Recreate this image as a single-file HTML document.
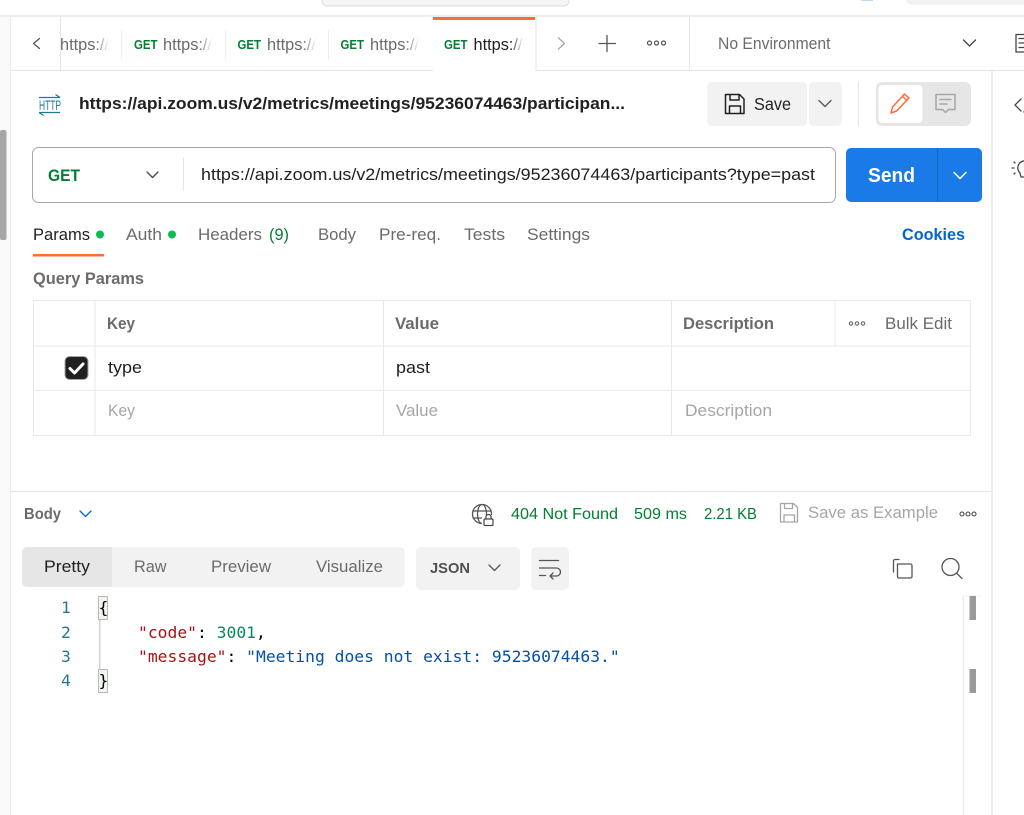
<!DOCTYPE html>
<html><head><meta charset="utf-8"><title>Postman</title>
<style>
html,body{margin:0;padding:0;background:#fff;width:1024px;height:815px;overflow:hidden}
svg{display:block;position:absolute;left:0;top:0}
text{font-family:"Liberation Sans",sans-serif;font-size:16.5px;fill:#212121;white-space:pre}
.g{fill:#6b6b6b}.l{fill:#a6a6a6}.b{font-weight:700}
.gr{fill:#007f31}
.m{font-family:"DejaVu Sans Mono",monospace;font-size:16.33px}
.n{fill:#237893}
.s{fill:none;stroke-width:1.3;stroke-linecap:round;stroke-linejoin:round}
</style></head><body>
<svg width="1024" height="815" viewBox="0 0 1024 815" xmlns="http://www.w3.org/2000/svg">
<defs><linearGradient id="f"><stop offset="0" stop-color="#fff" stop-opacity="0"/><stop offset="1" stop-color="#fff"/></linearGradient></defs>
<!-- browser top strip -->
<rect x="322" y="-8" width="247" height="14" rx="5" fill="#f5f5f5" stroke="#dcdcdc"/>
<rect x="906" y="-8" width="130" height="13" rx="5" fill="#f2f2f2"/>
<rect x="861" y="-2" width="12" height="3" fill="#bcd9f2"/>
<rect x="0" y="15" width="1024" height="2" fill="#ededed"/>
<!-- left rail -->
<rect x="0" y="17" width="10" height="798" fill="#f9f9f9"/>
<rect x="10" y="17" width="1" height="798" fill="#ededed"/>
<rect x="0" y="130" width="6.5" height="110" rx="2" fill="#a6a6a6"/>
<!-- tabs -->
<rect x="11" y="70" width="422" height="1" fill="#e6e6e6"/>
<rect x="536" y="70" width="488" height="1" fill="#e6e6e6"/>
<rect x="60" y="17" width="1" height="53" fill="#e6e6e6"/>
<rect x="121" y="30" width="1" height="29" fill="#ededed"/>
<rect x="225" y="30" width="1" height="29" fill="#ededed"/>
<rect x="328" y="30" width="1" height="29" fill="#ededed"/>
<rect x="433" y="17" width="102" height="3" fill="#ff6c37"/>
<rect x="535.5" y="17" width="1" height="54" fill="#e6e6e6"/>
<rect x="689" y="17" width="1" height="53" fill="#e6e6e6"/>
<path class="s" stroke="#555" d="M39.5 38.5l-6 5 6 5"/>
<text x="60" y="50" class="g" textLength="49" lengthAdjust="spacingAndGlyphs">https://</text>
<text x="134" y="49" class="b gr" style="font-size:12.5px" textLength="23.5" lengthAdjust="spacingAndGlyphs">GET</text>
<text x="163" y="50" class="g" textLength="49" lengthAdjust="spacingAndGlyphs">https://</text>
<text x="237.5" y="49" class="b gr" style="font-size:12.5px" textLength="23.5" lengthAdjust="spacingAndGlyphs">GET</text>
<text x="267" y="50" class="g" textLength="49" lengthAdjust="spacingAndGlyphs">https://</text>
<text x="340.5" y="49" class="b gr" style="font-size:12.5px" textLength="23.5" lengthAdjust="spacingAndGlyphs">GET</text>
<text x="370" y="50" class="g" textLength="49" lengthAdjust="spacingAndGlyphs">https://</text>
<text x="444" y="49" class="b gr" style="font-size:12.5px" textLength="23.5" lengthAdjust="spacingAndGlyphs">GET</text>
<text x="473.5" y="50" textLength="49" lengthAdjust="spacingAndGlyphs">https://</text>
<rect x="96" y="32" width="13" height="24" fill="url(#f)"/>
<rect x="199" y="32" width="13" height="24" fill="url(#f)"/>
<rect x="303" y="32" width="13" height="24" fill="url(#f)"/>
<rect x="406" y="32" width="13" height="24" fill="url(#f)"/>
<rect x="510" y="32" width="13" height="24" fill="url(#f)"/>
<path class="s" stroke="#a6a6a6" d="M558.5 38l6 5.500-6 5.500"/>
<path class="s" stroke="#555" d="M607 35.500v16M599 43.500h16.500"/>
<g fill="none" stroke="#555" stroke-width="1.2"><circle cx="649.500" cy="43" r="2"/><circle cx="656.500" cy="43" r="2"/><circle cx="663.500" cy="43" r="2"/></g>
<text x="718" y="49" class="g" textLength="112.500" lengthAdjust="spacingAndGlyphs">No Environment</text>
<path class="s" stroke="#444" d="M963.500 40l6 6 6-6"/>
<path class="s" stroke="#444" d="M1016 52V34.500h10M1016 52h10M1019 38.500h6M1019 43h6M1019 47.500h6"/>
<!-- right rail -->
<rect x="991" y="71" width="2" height="744" fill="#ededed"/>
<path class="s" stroke="#444" d="M1021 99l-6 6 6 6M1024 112l2-4"/>
<path class="s" stroke="#444" d="M1026 161a7 7 0 0 0-6 12l1 4h5M1014 162l1 1M1012 168h2M1014 174l1-1"/>
<!-- request name -->
<g fill="none" stroke="#1d7a92" stroke-width="1.300"><path d="M39 97.500h21M55.500 94.500l4.500 3M39 112.500h21M43.500 115.500l-4.500-3"/></g>
<text x="39" y="110" style="font-size:14px;fill:#1d7a92" textLength="22" lengthAdjust="spacingAndGlyphs">HTTP</text>
<text x="79" y="109" class="b" style="font-size:17px" textLength="546" lengthAdjust="spacingAndGlyphs">https://api.zoom.us/v2/metrics/meetings/95236074463/participan...</text>
<!-- save -->
<rect x="707" y="82" width="100" height="44" rx="5" fill="#f2f2f2"/>
<rect x="809" y="82" width="33" height="44" rx="5" fill="#f2f2f2"/>
<path class="s" stroke="#212121" style="stroke-width:1.500" d="M725.500 94.500h14l4.500 4.500v14.500h-18.500zM730 94.500v5.500h9v-5.500M729.500 113.500v-7.500h11v7.500"/>
<text x="754" y="110" style="font-size:17.500px" textLength="37" lengthAdjust="spacingAndGlyphs">Save</text>
<path class="s" stroke="#555" d="M819 100.500l6 6 6-6"/>
<rect x="858" y="82" width="1" height="44" fill="#e6e6e6"/>
<rect x="876" y="82" width="95" height="44" rx="6" fill="#e6e6e6"/>
<rect x="878.500" y="85" width="44" height="38" rx="4" fill="#fff"/>
<path class="s" stroke="#ff6c37" style="stroke-width:1.500" d="M891 113l1.500-6 12-13 4.500 4-12.500 13zM902.500 96.500l4.500 4"/>
<path class="s" stroke="#a6a6a6" style="stroke-width:1.500" d="M936 94.500h19v15h-6.500l-3 3-3-3h-6.500zM940 99.500h11M940 104h7"/>
<!-- url bar -->
<rect x="32.500" y="147.500" width="803" height="55" rx="6" fill="#fff" stroke="#a6a6a6" stroke-width="1"/>
<text x="48" y="181" class="b gr" style="font-size:17px" textLength="32" lengthAdjust="spacingAndGlyphs">GET</text>
<path class="s" stroke="#444" d="M147 172l5.500 5.500 5.500-5.500"/>
<rect x="183" y="158" width="1" height="33" fill="#e6e6e6"/>
<text x="201" y="180" style="font-size:17px" textLength="614" lengthAdjust="spacingAndGlyphs">https://api.zoom.us/v2/metrics/meetings/95236074463/participants?type=past</text>
<rect x="846" y="148" width="136" height="54" rx="5" fill="#1a7be8"/>
<rect x="937" y="148" width="1" height="54" fill="#1466c5"/>
<text x="868" y="182" class="b" style="font-size:20px;fill:#fff" textLength="47" lengthAdjust="spacingAndGlyphs">Send</text>
<path class="s" stroke="#fff" style="stroke-width:1.500" d="M954 172.500l6 6 6-6"/>
<!-- request tabs -->
<text x="33" y="240" textLength="57" lengthAdjust="spacingAndGlyphs">Params</text>
<circle cx="100" cy="234.500" r="4" fill="#0cbb52"/>
<rect x="33" y="254" width="71" height="2.500" fill="#ff6c37"/>
<text x="126" y="240" class="g" textLength="36" lengthAdjust="spacingAndGlyphs">Auth</text>
<circle cx="172" cy="234.500" r="4" fill="#0cbb52"/>
<text x="198" y="240" class="g" textLength="64" lengthAdjust="spacingAndGlyphs">Headers</text>
<text x="269" y="240" class="gr" textLength="20" lengthAdjust="spacingAndGlyphs">(9)</text>
<text x="318" y="240" class="g" textLength="38" lengthAdjust="spacingAndGlyphs">Body</text>
<text x="379" y="240" class="g" textLength="62" lengthAdjust="spacingAndGlyphs">Pre-req.</text>
<text x="464" y="240" class="g" textLength="41" lengthAdjust="spacingAndGlyphs">Tests</text>
<text x="527" y="240" class="g" textLength="63" lengthAdjust="spacingAndGlyphs">Settings</text>
<text x="902" y="240" class="b" style="fill:#0265d2" textLength="63" lengthAdjust="spacingAndGlyphs">Cookies</text>
<text x="33" y="284" class="b g" textLength="111" lengthAdjust="spacingAndGlyphs">Query Params</text>
<!-- table -->
<g fill="#e9e9e9">
<rect x="33" y="300" width="938" height="1"/><rect x="33" y="345.500" width="938" height="1"/><rect x="33" y="390" width="938" height="1"/><rect x="33" y="435" width="938" height="1"/>
<rect x="33" y="300" width="1" height="136"/><rect x="94.500" y="300" width="1" height="136"/><rect x="383" y="300" width="1" height="136"/><rect x="671" y="300" width="1" height="136"/><rect x="970" y="300" width="1" height="136"/><rect x="834.500" y="300" width="1" height="46"/>
</g>
<text x="107" y="329" class="b g" textLength="28" lengthAdjust="spacingAndGlyphs">Key</text>
<text x="395" y="329" class="b g" textLength="44" lengthAdjust="spacingAndGlyphs">Value</text>
<text x="683" y="329" class="b g" textLength="91" lengthAdjust="spacingAndGlyphs">Description</text>
<g fill="none" stroke="#6b6b6b" stroke-width="1.100"><circle cx="851" cy="323.500" r="1.700"/><circle cx="857" cy="323.500" r="1.700"/><circle cx="863" cy="323.500" r="1.700"/></g>
<text x="885" y="329" class="g" textLength="67" lengthAdjust="spacingAndGlyphs">Bulk Edit</text>
<rect x="65" y="356.500" width="23" height="23" rx="4.500" fill="#212121" stroke="#a6a6a6"/>
<path d="M70 368.500l4.500 4.500 8.500-9" fill="none" stroke="#fff" stroke-width="3" stroke-linecap="round" stroke-linejoin="round"/>
<text x="108" y="373" textLength="34" lengthAdjust="spacingAndGlyphs">type</text>
<text x="396" y="373" textLength="34" lengthAdjust="spacingAndGlyphs">past</text>
<text x="108" y="416" class="l" textLength="27" lengthAdjust="spacingAndGlyphs">Key</text>
<text x="396" y="416" class="l" textLength="42" lengthAdjust="spacingAndGlyphs">Value</text>
<text x="685" y="416" class="l" textLength="87" lengthAdjust="spacingAndGlyphs">Description</text>
<!-- response -->
<rect x="11" y="491" width="980" height="1" fill="#e6e6e6"/>
<text x="24" y="519" class="b g" style="font-size:15.500px" textLength="37" lengthAdjust="spacingAndGlyphs">Body</text>
<path class="s" stroke="#0265d2" d="M80 511l5.500 5.500 5.500-5.500"/>
<g class="s" stroke="#555"><circle cx="482" cy="514" r="9.500"/><ellipse cx="482" cy="514" rx="4.500" ry="9.500"/><path d="M473 511h18M473 518h9"/></g>
<rect x="482" y="515" width="13" height="11" fill="#fff"/>
<rect x="484" y="519" width="9" height="6.500" rx="1" fill="#fff" stroke="#444" stroke-width="1.200"/>
<path d="M486 519v-2a2.500 2.500 0 0 1 5 0v2" fill="none" stroke="#444" stroke-width="1.200"/>
<text x="511" y="519" class="gr" style="font-size:15.500px" textLength="107" lengthAdjust="spacingAndGlyphs">404 Not Found</text>
<text x="634" y="519" class="gr" style="font-size:15.500px" textLength="53" lengthAdjust="spacingAndGlyphs">509 ms</text>
<text x="704" y="519" class="gr" style="font-size:15.500px" textLength="53" lengthAdjust="spacingAndGlyphs">2.21 KB</text>
<path class="s" stroke="#a6a6a6" d="M780.500 503.500h13l4 4v14.500h-17zM784.500 503.500v5h8v-5M784 522v-7h10.500v7"/>
<text x="808" y="518" class="l" style="font-size:17px" textLength="130" lengthAdjust="spacingAndGlyphs">Save as Example</text>
<g fill="none" stroke="#444" stroke-width="1.100"><circle cx="962" cy="514" r="2"/><circle cx="968" cy="514" r="2"/><circle cx="974" cy="514" r="2"/></g>
<!-- response tabs -->
<rect x="22" y="547" width="383" height="40" rx="5" fill="#f2f2f2"/>
<path d="M27 547h85v40h-85a5 5 0 0 1-5-5v-30a5 5 0 0 1 5-5z" fill="#e6e6e6"/>
<text x="44" y="572" textLength="46" lengthAdjust="spacingAndGlyphs">Pretty</text>
<text x="134" y="572" class="g" textLength="32.500" lengthAdjust="spacingAndGlyphs">Raw</text>
<text x="211" y="572" class="g" textLength="60" lengthAdjust="spacingAndGlyphs">Preview</text>
<text x="316" y="572" class="g" textLength="67" lengthAdjust="spacingAndGlyphs">Visualize</text>
<rect x="416" y="547" width="104" height="43" rx="5" fill="#f2f2f2"/>
<text x="430" y="573" style="font-size:15px;fill:#505050;font-weight:700" textLength="40" lengthAdjust="spacingAndGlyphs">JSON</text>
<path class="s" stroke="#555" d="M489 565l5.500 5.500 5.500-5.500"/>
<rect x="531" y="547" width="38" height="43" rx="5" fill="#f2f2f2"/>
<path class="s" stroke="#555" d="M539.500 560.500h19M539.500 568h17a3.500 3.500 0 0 1 0 8h-6M553 573l-3 3 3 3M539.500 575.500h6"/>
<path class="s" stroke="#555" d="M899 559.500h-4a1.500 1.500 0 0 0-1.500 1.500v11M897.500 564h13a1.500 1.500 0 0 1 1.500 1.500v11a1.500 1.500 0 0 1-1.500 1.500h-11.500a1.500 1.500 0 0 1-1.500-1.500z"/>
<circle cx="950.500" cy="567" r="8.500" fill="none" stroke="#555" stroke-width="1.300"/>
<path class="s" stroke="#555" d="M956.500 573l5.500 5.500"/>
<!-- code -->
<rect x="99" y="597" width="1.500" height="96" fill="#d4d4d4"/>
<rect x="98.500" y="596.500" width="9" height="23" fill="#f0f5ee" stroke="#b9b9b9"/>
<rect x="98.500" y="669.500" width="9" height="23" fill="#f0f5ee" stroke="#b9b9b9"/>
<text x="61" y="613" class="m n">1</text>
<text x="61" y="638" class="m n">2</text>
<text x="61" y="662" class="m n">3</text>
<text x="61" y="686" class="m n">4</text>
<text x="98.500" y="613" class="m" style="fill:#000">{</text>
<text x="98.500" y="686" class="m" style="fill:#000">}</text>
<text x="138" y="638" class="m" style="fill:#000"><tspan style="fill:#a31515">"code"</tspan>: <tspan style="fill:#098658">3001</tspan>,</text>
<text x="138" y="662" class="m" style="fill:#000"><tspan style="fill:#a31515">"message"</tspan>: <tspan style="fill:#0451a5">"Meeting does not exist: 95236074463."</tspan></text>
<!-- minimap -->
<rect x="962.500" y="596" width="1.500" height="219" fill="#ededed"/>
<rect x="963" y="595.500" width="19" height="1" fill="#f2f2f2"/>
<rect x="969.500" y="596" width="6.500" height="24" fill="#9a9a9a"/>
<rect x="969.500" y="669" width="6.500" height="24" fill="#9a9a9a"/>
</svg>
</body></html>
